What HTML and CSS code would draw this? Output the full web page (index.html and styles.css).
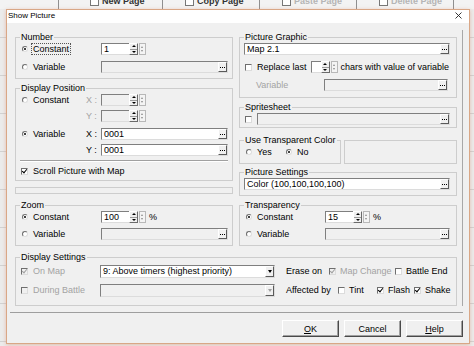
FILE: index.html
```html
<!DOCTYPE html>
<html lang="en">
<head>
    <meta charset="UTF-8">
    <title>Show Picture</title>
    <link rel="stylesheet" href="styles.css">
</head>
<body>
    <div class="app">
        <div class="app-toolbar">
            <div class="tool tool-first"></div>
            <div class="tool tool-new"><span class="tool-icon"></span>New Page</div>
            <div class="tool"><span class="tool-icon"></span>Copy Page</div>
            <div class="tool tool-off"><span class="tool-icon"></span>Paste Page</div>
            <div class="tool tool-off"><span class="tool-icon"></span>Delete Page</div>
        </div>
    </div>

    <div class="dialog">
        <div class="titlebar">
            <span>Show Picture</span>
            <svg class="close" width="7" height="7" viewBox="0 0 7 7"><path d="M0.5 0.5 L6.5 6.5 M6.5 0.5 L0.5 6.5" stroke="#222" stroke-width="0.9"/></svg>
        </div>

        <div class="main">
            <div class="columns">
                <!-- left column -->
                <div class="col">
                    <fieldset class="group left g-number">
                        <legend>Number</legend>
                        <div class="row">
                            <label class="opt"><span class="radio on"></span><span class="focus">Constant</span></label>
                            <div class="spin">
                                <span class="field">1</span>
                                <span class="updown"><i class="up"></i><i class="down"></i></span>
                                <span class="thin"></span>
                            </div>
                        </div>
                        <div class="row">
                            <label class="opt"><span class="radio"></span>Variable</label>
                            <div class="field off grow"><span class="dots"></span></div>
                        </div>
                    </fieldset>

                    <fieldset class="group left g-position">
                        <legend>Display Position</legend>
                        <div class="row">
                            <label class="opt opt-short"><span class="radio"></span>Constant</label>
                            <span class="axis muted">X :</span>
                            <div class="spin">
                                <span class="field off"></span>
                                <span class="updown"><i class="up"></i><i class="down"></i></span>
                                <span class="thin"></span>
                            </div>
                        </div>
                        <div class="row r4">
                            <span class="opt opt-short"></span>
                            <span class="axis muted">Y :</span>
                            <div class="spin">
                                <span class="field off"></span>
                                <span class="updown"><i class="up"></i><i class="down"></i></span>
                                <span class="thin"></span>
                            </div>
                        </div>
                        <div class="row">
                            <label class="opt opt-short"><span class="radio on"></span>Variable</label>
                            <span class="axis">X :</span>
                            <div class="field grow">0001<span class="dots"></span></div>
                        </div>
                        <div class="row r4">
                            <span class="opt opt-short"></span>
                            <span class="axis">Y :</span>
                            <div class="field grow">0001<span class="dots"></span></div>
                        </div>
                        <div class="sep"></div>
                        <div class="row">
                            <label class="opt"><span class="chk on"></span>Scroll Picture with Map</label>
                        </div>
                    </fieldset>

                    <div class="empty-strip"></div>
                </div>

                <!-- right column -->
                <div class="col">
                    <fieldset class="group right g-graphic">
                        <legend>Picture Graphic</legend>
                        <div class="row">
                            <div class="field grow pull">Map 2.1<span class="dots"></span></div>
                        </div>
                        <div class="row">
                            <label class="opt-free"><span class="chk"></span>Replace last</label>
                            <div class="spin spin-s">
                                <span class="field"></span>
                                <span class="updown"><i class="up"></i><i class="down"></i></span>
                                <span class="thin"></span>
                            </div>
                            <span class="after-spin">chars with value of variable</span>
                        </div>
                        <div class="row">
                            <span class="indent muted">Variable</span>
                            <div class="field off grow trim"><span class="dots"></span></div>
                        </div>
                    </fieldset>

                    <fieldset class="group right g-sprite">
                        <legend>Spritesheet</legend>
                        <div class="row">
                            <span class="chk solo"></span>
                            <div class="field off grow"><span class="dots"></span></div>
                        </div>
                    </fieldset>

                    <div class="trow">
                        <fieldset class="group right g-trans-color">
                            <legend>Use Transparent Color</legend>
                            <div class="row">
                                <label class="opt opt-yes"><span class="radio"></span>Yes</label>
                                <label class="opt-free"><span class="radio on"></span>No</label>
                            </div>
                        </fieldset>
                        <div class="empty-box"></div>
                    </div>

                    <fieldset class="group right g-settings">
                        <legend>Picture Settings</legend>
                        <div class="row">
                            <div class="field grow pull">Color (100,100,100,100)<span class="dots"></span></div>
                        </div>
                    </fieldset>
                </div>

                <fieldset class="group left g-zoom">
                    <legend>Zoom</legend>
                    <div class="row">
                        <label class="opt"><span class="radio on"></span>Constant</label>
                        <div class="spin">
                            <span class="field">100</span>
                            <span class="updown"><i class="up"></i><i class="down"></i></span>
                            <span class="thin"></span>
                        </div>
                        <span class="pct">%</span>
                    </div>
                    <div class="row">
                        <label class="opt"><span class="radio"></span>Variable</label>
                        <div class="field off grow"><span class="dots"></span></div>
                    </div>
                </fieldset>

                <fieldset class="group right g-zoom">
                    <legend>Transparency</legend>
                    <div class="row">
                        <label class="opt"><span class="radio on"></span>Constant</label>
                        <div class="spin">
                            <span class="field">15</span>
                            <span class="updown"><i class="up"></i><i class="down"></i></span>
                            <span class="thin"></span>
                        </div>
                        <span class="pct">%</span>
                    </div>
                    <div class="row">
                        <label class="opt"><span class="radio"></span>Variable</label>
                        <div class="field off grow"><span class="dots"></span></div>
                    </div>
                </fieldset>
            </div>

            <fieldset class="group g-display">
                <legend>Display Settings</legend>
                <div class="row">
                    <label class="opt-ds"><span class="chk on dim"></span><span class="muted">On Map</span></label>
                    <div class="select">9: Above timers (highest priority)<span class="drop"></span></div>
                    <span class="ds-label w-erase">Erase on</span>
                    <label class="cb w-map"><span class="chk on dim"></span><span class="muted">Map Change</span></label>
                    <label class="cb"><span class="chk"></span>Battle End</label>
                </div>
                <div class="row">
                    <label class="opt-ds"><span class="chk dim"></span><span class="muted">During Battle</span></label>
                    <div class="select off"><span class="drop dim"></span></div>
                    <span class="ds-label w-affect">Affected by</span>
                    <label class="cb w-tint"><span class="chk"></span>Tint</label>
                    <label class="cb w-flash"><span class="chk on"></span>Flash</label>
                    <label class="cb"><span class="chk on"></span>Shake</label>
                </div>
            </fieldset>
        </div>

        <div class="footer">
            <button class="btn"><u>O</u>K</button>
            <button class="btn">Cancel</button>
            <button class="btn"><u>H</u>elp</button>
        </div>
    </div>
</body>
</html>
```

FILE: styles.css
```css
* {
    box-sizing: border-box;
}

body {
    margin: 0;
    width: 474px;
    height: 346px;
    overflow: hidden;
    position: relative;
    font-family: "Liberation Sans", Arial, sans-serif;
    font-size: 9px;
    color: #000;
    background: #e6e6e6;
}

/* the editor window behind the dialog */
.app {
    height: 346px;
    background: repeating-linear-gradient(to bottom, #ececec 0, #ececec 37px, #d2d2d2 37px, #d2d2d2 38px);
}

.app-toolbar {
    display: flex;
    height: 9px;
    overflow: hidden;
    background: #f3f3f3;
}

.tool {
    display: flex;
    align-items: flex-end;
    gap: 3px;
    width: 97px;
    padding: 0 0 3px 22px;
    border-right: 1px solid #8f8f8f;
    font-size: 9px;
    line-height: 10px;
    font-weight: bold;
    white-space: nowrap;
    color: #333;
}

.tool-first {
    width: 59px;
}

.tool-new {
    width: 104px;
    padding-left: 31px;
}

.tool-off {
    color: #b5b5b5;
}

.tool-icon {
    flex: none;
    width: 9px;
    height: 10px;
    border: 1px solid #777;
    background: #fff;
}

/* dialog window */
.dialog {
    position: absolute;
    left: 6px;
    top: 9px;
    width: 464px;
    height: 335px;
    border: 1px solid #d9a786;
    background: #f0f0f0;
    box-shadow: 0 1px 4px rgba(216, 140, 110, 0.5);
}

.titlebar {
    height: 13px;
    display: flex;
    justify-content: space-between;
    align-items: flex-start;
    padding: 1px 7px 0 1px;
    background: #fff;
    font-size: 8px;
    line-height: 9px;
}

.close {
    margin-top: 1px;
}

.main {
    width: 456px;
    margin-top: 7px;
    padding: 2px 5px 0 8px;
    border-right: 1px solid #a8a8a8;
}

.columns {
    display: grid;
    grid-template-columns: 218px 218px;
    column-gap: 6px;
    row-gap: 4px;
}

.col {
    display: flex;
    flex-direction: column;
}

/* group boxes */
.group {
    margin: 0;
    min-width: 0;
    padding: 1px 4px 5px 6px;
    border: 1px solid #cdcdcd;
}

.group.right {
    padding-right: 6px;
}

.group legend {
    margin-left: -2px;
    padding: 0 1px;
    line-height: 10px;
}

.row {
    display: flex;
    align-items: center;
    height: 12px;
}

.row + .row {
    margin-top: 6px;
}

.row.r4 {
    margin-top: 4px;
}

.g-position {
    margin-top: 4px;
    padding-bottom: 3px;
}

.sep {
    height: 2px;
    margin: 4px 0 3px -2px;
    border-top: 1px solid #a0a0a0;
    border-bottom: 1px solid #fff;
}

.sep + .row {
    margin-top: 0;
}

.empty-strip {
    height: 7px;
    margin-top: 6px;
    border: 1px solid #cdcdcd;
}

.g-graphic {
    padding-bottom: 6px;
}

.g-sprite {
    margin-top: 4px;
    padding-bottom: 2px;
}

.trow {
    display: flex;
    align-items: flex-end;
    gap: 3px;
    margin-top: 7px;
}

.g-trans-color {
    width: 102px;
}

.g-trans-color legend {
    white-space: nowrap;
}

.empty-box {
    flex: 1;
    height: 24px;
    border: 1px solid #cdcdcd;
}

.g-settings {
    margin-top: 3px;
}

.g-zoom .row + .row {
    margin-top: 5px;
}

.g-display {
    margin-top: 6px;
    padding-top: 3px;
    padding-bottom: 9px;
}

.g-display .row + .row {
    margin-top: 7px;
}

/* labels */
.opt, .opt-free, .opt-ds, .cb {
    display: flex;
    align-items: center;
    white-space: nowrap;
}

.opt {
    width: 79px;
}

.opt-short {
    width: 64px;
}

.opt-yes {
    width: 40px;
}

.opt-ds {
    width: 78px;
}

.axis {
    width: 15px;
}

.muted {
    color: #a3a3a3;
}

.focus {
    margin: -1px 0 -1px -2px;
    padding: 0 1px;
    border: 1px dotted #555;
}

.indent {
    width: 78px;
    padding-left: 10px;
}

.after-spin {
    margin-left: 3px;
    white-space: nowrap;
}

.pct {
    margin-left: 3px;
}

/* radio and check boxes */
.radio {
    position: relative;
    flex: none;
    width: 6px;
    height: 6px;
    margin-right: 5px;
    border: 1px solid;
    border-color: #6e6e6e #dedede #dedede #6e6e6e;
    border-radius: 50%;
    background: #fff;
}

.radio.on::after {
    content: "";
    position: absolute;
    left: 1px;
    top: 1px;
    width: 2px;
    height: 2px;
    border-radius: 50%;
    background: #000;
}

.chk {
    position: relative;
    flex: none;
    width: 7px;
    height: 7px;
    margin: 0 5px 0 -1px;
    border: 1px solid;
    border-color: #6e6e6e #dcdcdc #dcdcdc #6e6e6e;
    background: #fff;
}

.cb .chk {
    margin: 0 4px 0 0;
}

.chk.on::after {
    content: "";
    position: absolute;
    left: 1px;
    top: -1px;
    width: 2px;
    height: 4px;
    border: solid #000;
    border-width: 0 1px 1px 0;
    transform: rotate(40deg);
}

.chk.dim {
    background: #f0f0f0;
}

.chk.dim::after {
    border-color: #a0a0a0;
}

.chk.solo {
    margin-right: 5px;
}

/* text fields */
.field {
    display: flex;
    align-items: center;
    height: 12px;
    padding-left: 2px;
    border: 1px solid;
    border-color: #7f7f7f #dcdcdc #dcdcdc #7f7f7f;
    background: #fff;
    white-space: nowrap;
}

.field.off {
    background: #f0f0f0;
}

.grow {
    flex: 1;
}

.pull {
    margin-left: -2px;
}

.trim {
    margin-right: 2px;
}

.dots {
    position: relative;
    width: 9px;
    height: 10px;
    margin-left: auto;
    border: 1px solid;
    border-color: #fff #5a5a5a #5a5a5a #fff;
    background: #f0f0f0;
}

.dots::after {
    content: "";
    position: absolute;
    left: 1px;
    top: 4px;
    width: 1px;
    height: 1px;
    background: #000;
    box-shadow: 2px 0 #000, 4px 0 #000;
}

/* spinners */
.spin {
    display: flex;
    height: 12px;
}

.spin .field {
    width: 28px;
    border-right: none;
}

.spin-s {
    margin-left: 4px;
}

.spin-s .field {
    width: 10px;
}

.updown {
    display: flex;
    flex-direction: column;
    width: 9px;
    height: 12px;
    border: 1px solid;
    border-color: #fff #6a6a6a #6a6a6a #fff;
    background: #f0f0f0;
}

.updown i {
    flex: 1;
    display: flex;
    align-items: center;
    justify-content: center;
}

.updown .up {
    border-bottom: 1px solid #9a9a9a;
}

.updown .up::after, .updown .down::after {
    content: "";
    border-left: 2px solid transparent;
    border-right: 2px solid transparent;
}

.updown .up::after {
    border-bottom: 2px solid #000;
}

.updown .down::after {
    border-top: 2px solid #000;
}

.thin {
    position: relative;
    width: 7px;
    height: 12px;
    margin-left: 1px;
    border: 1px solid #b8b8b8;
    background: #f4f4f4;
}

.thin::before, .thin::after {
    content: "";
    position: absolute;
    left: 1px;
    border-left: 1.5px solid transparent;
    border-right: 1.5px solid transparent;
}

.thin::before {
    top: 2px;
    border-bottom: 2px solid #8a8a8a;
}

.thin::after {
    bottom: 2px;
    border-top: 2px solid #8a8a8a;
}

/* drop down */
.select {
    display: flex;
    align-items: center;
    width: 175px;
    height: 13px;
    padding-left: 2px;
    border: 1px solid;
    border-color: #7f7f7f #dcdcdc #dcdcdc #7f7f7f;
    background: #fff;
    white-space: nowrap;
}

.select.off {
    background: #f0f0f0;
}

.drop {
    display: flex;
    align-items: center;
    justify-content: center;
    width: 9px;
    height: 11px;
    margin-left: auto;
    border: 1px solid;
    border-color: #fff #5a5a5a #5a5a5a #fff;
    background: #f0f0f0;
}

.drop::after {
    content: "";
    border-left: 2.5px solid transparent;
    border-right: 2.5px solid transparent;
    border-top: 3px solid #000;
}

.drop.dim::after {
    border-top-color: #a0a0a0;
}

.ds-label {
    margin-left: 11px;
    white-space: nowrap;
}

.w-erase {
    width: 43px;
}

.w-affect {
    width: 52px;
}

.w-map {
    width: 66px;
}

.w-tint {
    width: 39px;
}

.w-flash {
    width: 37px;
}

/* buttons */
.footer {
    display: flex;
    justify-content: flex-end;
    gap: 5px;
    width: 453px;
    margin: 6px 0 0 3px;
    padding-top: 7px;
    border-top: 1px solid #9e9e9e;
}

.btn {
    width: 57px;
    height: 17px;
    padding: 0;
    border: 1px solid;
    border-color: #fff #4a4a4a #4a4a4a #fff;
    box-shadow: inset -1px -1px 0 #a0a0a0;
    background: #f0f0f0;
    font: inherit;
    color: #000;
}
```
